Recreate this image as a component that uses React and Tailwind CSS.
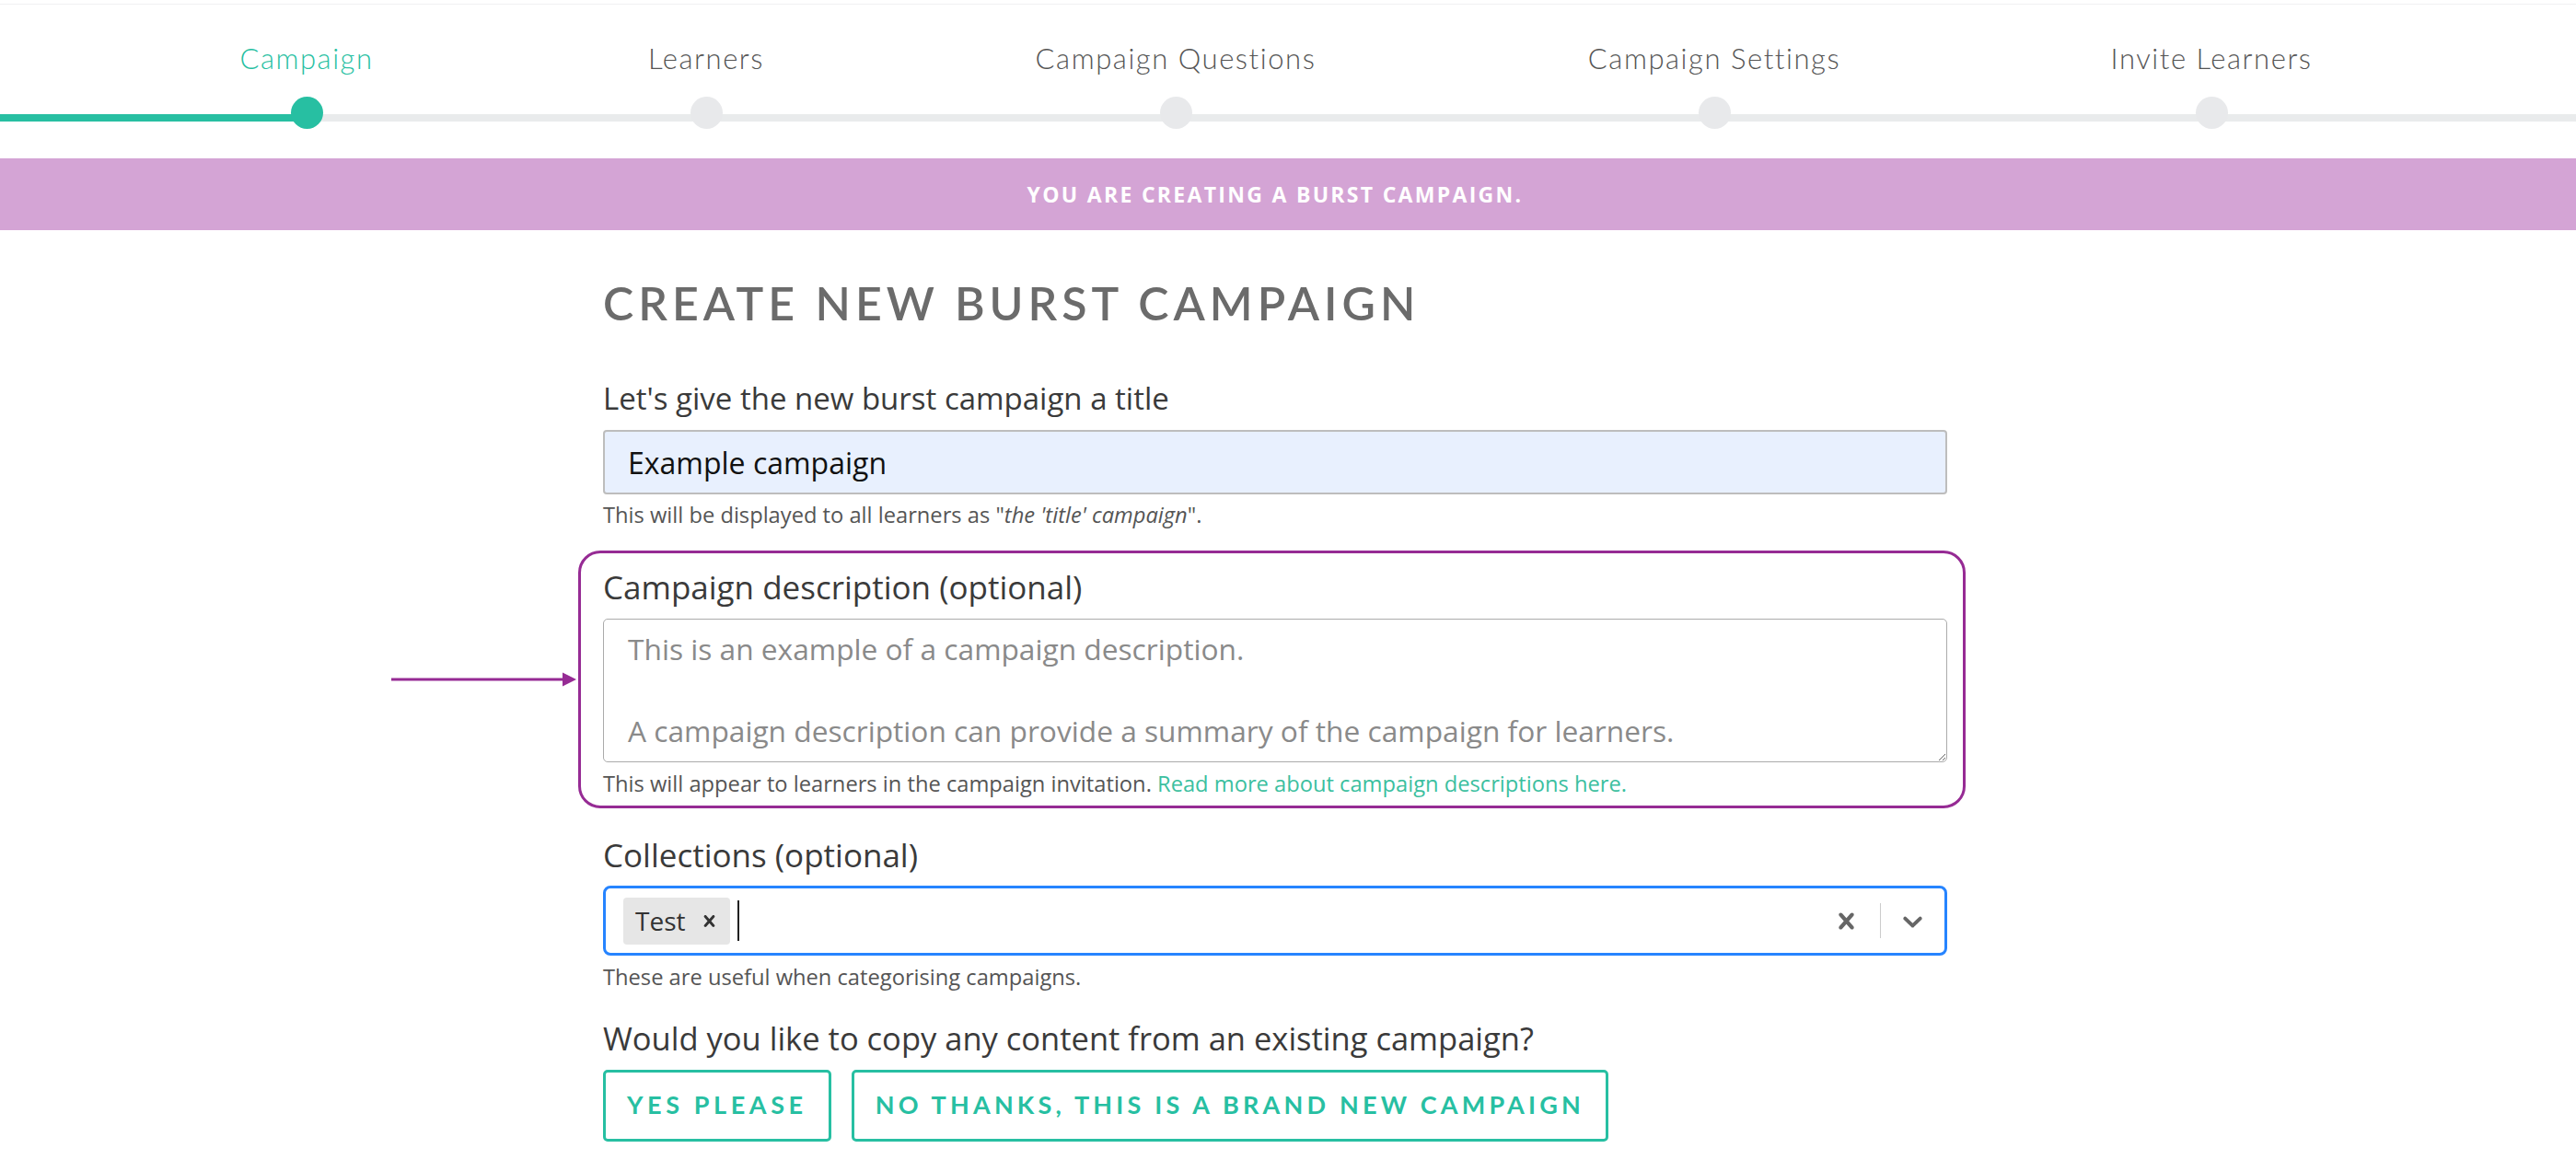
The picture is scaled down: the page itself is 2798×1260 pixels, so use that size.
import React from 'react';

const steps = [
  { label: 'Campaign', active: true },
  { label: 'Learners' },
  { label: 'Campaign Questions' },
  { label: 'Campaign Settings' },
  { label: 'Invite Learners' },
];

function CrossIcon({ className }) {
  return (
    <svg viewBox="0 0 20 20" className={className} fill="currentColor">
      <path d="M14.348 14.849c-0.469 0.469-1.229 0.469-1.697 0l-2.651-3.030-2.651 3.029c-0.469 0.469-1.229 0.469-1.697 0-0.469-0.469-0.469-1.229 0-1.697l2.758-3.15-2.759-3.152c-0.469-0.469-0.469-1.228 0-1.697s1.228-0.469 1.697 0l2.652 3.031 2.651-3.031c0.469-0.469 1.228-0.469 1.697 0s0.469 1.229 0 1.697l-2.758 3.152 2.758 3.15c0.469 0.469 0.469 1.229 0 1.698z" />
    </svg>
  );
}

function ChevronIcon({ className }) {
  return (
    <svg viewBox="0 0 20 20" className={className} fill="currentColor">
      <path d="M4.516 7.548c0.436-0.446 1.043-0.481 1.576 0l3.908 3.747 3.908-3.747c0.533-0.481 1.141-0.446 1.574 0 0.436 0.445 0.408 1.197 0 1.615-0.406 0.418-4.695 4.502-4.695 4.502-0.217 0.223-0.502 0.335-0.787 0.335s-0.57-0.112-0.789-0.335c0 0-4.287-4.084-4.695-4.502s-0.436-1.17 0-1.615z" />
    </svg>
  );
}

export default function App() {
  return (
    <div className="min-h-screen bg-white font-['Open_Sans',sans-serif] text-[#3a3a3a]">
      <div className="h-[4px]" />
      <div className="h-px bg-[#f0f1f2]" />

      {/* Stepper */}
      <div className="relative pt-[40px] pb-[32px]">
        <div className="absolute left-0 right-0 top-[119px] h-[8px] bg-[#e9ebec]" />
        <div className="absolute left-0 top-[119px] h-[8px] w-[334px] bg-[#27bfa2]" />
        <div className="relative grid grid-cols-[666px_202px_818px_352px_728px]">
          {steps.map(step => (
            <div key={step.label} className="flex flex-col items-center">
              <span
                className={
                  "font-['Lato',sans-serif] font-light text-[31px] leading-[36px] tracking-[0.05em] whitespace-nowrap " +
                  (step.active ? 'text-[#27bfa2]' : 'text-[#555555]')
                }
              >
                {step.label}
              </span>
              <div
                className={
                  'mt-[24px] w-[35px] h-[35px] rounded-full ' +
                  (step.active ? 'bg-[#27bfa2]' : 'bg-[#e8e9eb]')
                }
              />
            </div>
          ))}
        </div>
      </div>

      {/* Banner */}
      <div className="h-[78px] bg-[#d4a4d5] flex items-center">
        <div className="w-[2770px] text-center text-white font-bold text-[23px] tracking-[0.1em]">
          YOU ARE CREATING A BURST CAMPAIGN.
        </div>
      </div>

      {/* Form */}
      <div className="w-[2770px]">
        <div className="mx-auto w-[1460px] pt-[49px] pb-[10px]">
          <h1 className="font-['Lato',sans-serif] font-semibold text-[50px] leading-[60px] tracking-[0.1em] text-[#6b6b6b]">
            CREATE NEW BURST CAMPAIGN
          </h1>

          <label className="block mt-[52px] text-[33px] leading-[44px]">
            Let's give the new burst campaign a title
          </label>
          <input
            className="mt-[12px] block w-full h-[70px] border-2 border-[#bdbdbd] rounded-[4px] bg-[#e8f0fe] px-[25px] text-[32px] text-[#111111] outline-none"
            defaultValue="Example campaign"
          />
          <p className="mt-[7px] text-[23.7px] leading-[30px] text-[#555555]">
            This will be displayed to all learners as "<em>the 'title' campaign</em>".
          </p>

          <div className="relative mt-[23.5px] -ml-[27px] -mr-[20px] border-[3px] border-[#962b94] rounded-[24px] pl-[24px] pr-[17px] pt-[15px] pb-[9.5px]">
            <svg
              className="absolute right-[calc(100%+5px)] top-1/2 -translate-y-1/2"
              width="201"
              height="16"
              viewBox="0 0 201 16"
            >
              <line x1="0" y1="8" x2="188" y2="8" stroke="#962b94" strokeWidth="3" />
              <polygon points="186,0.5 201,8 186,15.5" fill="#962b94" />
            </svg>
            <label className="block text-[35px] leading-[44px]">
              Campaign description (optional)
            </label>
            <textarea
              className="mt-[12px] block w-full h-[156px] border border-[#ababab] rounded-[5px] px-[26px] py-[10px] text-[31.7px] leading-[44.5px] text-[#333333] placeholder:text-[#8a8a8a] outline-none resize-y"
              placeholder={'This is an example of a campaign description.\n\nA campaign description can provide a summary of the campaign for learners.'}
            />
            <p className="mt-[8px] text-[23.7px] leading-[30px] text-[#555555]">
              This will appear to learners in the campaign invitation.{' '}
              <a className="text-[#3cbf9f]">Read more about campaign descriptions here.</a>
            </p>
          </div>

          <label className="block mt-[29px] text-[35px] leading-[44px]">
            Collections (optional)
          </label>
          <div className="mt-[11px] h-[76px] border-[3px] border-[#2684ff] rounded-[8px] flex items-center pl-[19px]">
            <div className="h-[51px] bg-[#e6e6e6] rounded-[4px] flex items-center pl-[13px] pr-[10px]">
              <span className="text-[28px] text-[#333333]">Test</span>
              <CrossIcon className="ml-[14px] w-[25px] h-[25px] text-[#333333]" />
            </div>
            <div className="ml-[8px] w-[2px] h-[44px] bg-[#222222]" />
            <div className="ml-auto flex items-center pr-[17px]">
              <CrossIcon className="w-[35px] h-[35px] text-[#666666]" />
              <div className="ml-[19px] w-px h-[38px] bg-[#cccccc]" />
              <ChevronIcon className="ml-[17px] w-[35px] h-[35px] text-[#666666]" />
            </div>
          </div>
          <p className="mt-[8px] text-[23.7px] leading-[30px] text-[#555555]">
            These are useful when categorising campaigns.
          </p>

          <label className="block mt-[29.5px] text-[34.5px] leading-[44px]">
            Would you like to copy any content from an existing campaign?
          </label>
          <div className="mt-[12px] flex gap-[22px]">
            <button className="h-[78px] border-[3px] border-[#27bfa2] rounded-[5px] px-[23px] font-['Lato',sans-serif] font-bold text-[27px] tracking-[0.17em] text-[#27bfa2]">
              YES PLEASE
            </button>
            <button className="h-[78px] border-[3px] border-[#27bfa2] rounded-[5px] px-[23px] font-['Lato',sans-serif] font-bold text-[27px] tracking-[0.155em] text-[#27bfa2]">
              NO THANKS, THIS IS A BRAND NEW CAMPAIGN
            </button>
          </div>
        </div>
      </div>
    </div>
  );
}
